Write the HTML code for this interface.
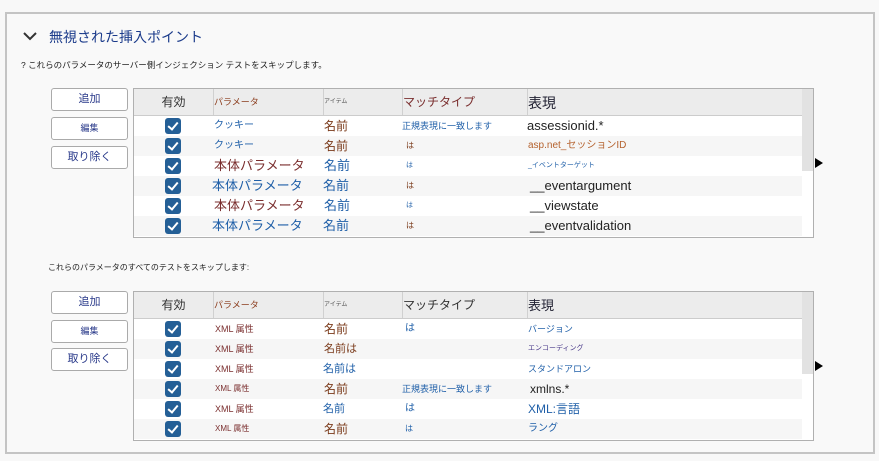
<!DOCTYPE html>
<html><head><meta charset="utf-8"><style>
body{margin:0;width:879px;height:461px;background:#f8f8f8;font-family:"Liberation Sans","Noto Sans CJK JP",sans-serif;position:relative;overflow:hidden}
.a{position:absolute;white-space:nowrap}
.panel{position:absolute;left:5px;top:12px;width:866px;height:438px;border:2px solid #c4c4c4;background:#f9f9f9}
.btn{position:absolute;left:51px;width:75px;height:21px;border:1px solid #aaa;border-radius:3px;background:#fff;color:#2a3a8a;font-size:11px;text-align:center;line-height:21px}
.tbl{position:absolute;left:133px;width:679px;height:148px;border:1px solid #b0b0b0;background:#fff;overflow:hidden}
.hdr{position:absolute;left:0;top:0;width:668px;height:26px;background:#ececec;border-bottom:1px solid #ccc}
.hdr div{position:absolute;top:0;height:26px;border-left:1px solid #d0d0d0}
.sb{position:absolute;left:668px;top:0;width:11px;height:148px;background:#fff}
.sb i{position:absolute;left:0;top:0;width:11px;height:82px;background:#e2e2e2}
.row{position:absolute;left:0;width:668px;height:20px}
.row:nth-child(even){background:#f6f6f6}
.cb{position:absolute;left:31px;top:2px;width:16px;height:16px;border-radius:3px;background:#245f96}
.cb:after{content:"";position:absolute;left:5px;top:2px;width:4px;height:8px;border:solid #fff;border-width:0 2px 2px 0;transform:rotate(40deg)}
.c{position:absolute;top:0;line-height:20px}
.br{color:#7a3a1a}.bl{color:#1f5fa8}.dk{color:#222}.or{color:#b5622e}.mr{color:#7a2e2e}
.arrow{position:absolute;width:0;height:0;border-top:5px solid transparent;border-bottom:5px solid transparent;border-left:8px solid #000}
</style></head><body>
<div class="panel"></div>
<svg class="a" style="left:22px;top:30px" width="16" height="12"><path d="M2 3 L8 9 L14 3" stroke="#333" stroke-width="2" fill="none"/></svg>
<div class="a" style="left:49px;top:27px;font-size:14px;color:#1a3a8a">無視された挿入ポイント</div>
<div class="a" style="left:21px;top:59px;font-size:8.5px;color:#222">? これらのパラメータのサーバー側インジェクション テストをスキップします。</div>

<div class="btn" style="top:88px">追加</div>
<div class="btn" style="top:117px;font-size:9px">編集</div>
<div class="btn" style="top:146px">取り除く</div>

<div class="tbl" style="top:88px">
<div class="hdr">
<div style="left:0;border:0;width:79px;text-align:center;line-height:26px;font-size:12px;color:#333">有効</div>
<div style="left:79px;width:110px;line-height:26px;font-size:9px;color:#8a3a1a">パラメータ</div>
<div style="left:189px;width:79px;line-height:26px;font-size:6px;color:#555">アイテム</div>
<div style="left:268px;width:125px;line-height:26px;font-size:12px;color:#7a2e2e">マッチタイプ</div>
<div style="left:393px;width:275px;line-height:28px;font-size:14px;color:#223">表現</div>
</div>
<div style="position:absolute;top:27px;left:0">
<div class="row" style="top:0;background:#fff"><i class="cb"></i><span class="c bl" style="left:80px;font-size:10px">クッキー</span><span class="c br" style="left:190px;font-size:12px">名前</span><span class="c bl" style="left:268px;font-size:9px">正規表現に一致します</span><span class="c dk" style="left:393px;font-size:13px">assessionid.*</span></div>
<div class="row" style="top:20px;background:#f6f6f6"><i class="cb"></i><span class="c bl" style="left:80px;font-size:10px">クッキー</span><span class="c br" style="left:190px;font-size:12px">名前</span><span class="c br" style="left:272px;font-size:8px">は</span><span class="c or" style="left:394px;font-size:10px">asp.net_セッションID</span></div>
<div class="row" style="top:40px;background:#fff"><i class="cb"></i><span class="c mr" style="left:80px;font-size:13px">本体パラメータ</span><span class="c bl" style="left:190px;font-size:13px">名前</span><span class="c bl" style="left:272px;font-size:7px">は</span><span class="c bl" style="left:394px;font-size:7px">_イベントターゲット</span></div>
<div class="row" style="top:60px;background:#f6f6f6"><i class="cb"></i><span class="c bl" style="left:78px;font-size:13px">本体パラメータ</span><span class="c bl" style="left:189px;font-size:13px">名前</span><span class="c br" style="left:272px;font-size:8px">は</span><span class="c dk" style="left:396px;font-size:13px">__eventargument</span></div>
<div class="row" style="top:80px;background:#fff"><i class="cb"></i><span class="c mr" style="left:80px;font-size:13px">本体パラメータ</span><span class="c bl" style="left:190px;font-size:13px">名前</span><span class="c bl" style="left:272px;font-size:7px">は</span><span class="c dk" style="left:396px;font-size:13px">__viewstate</span></div>
<div class="row" style="top:100px;background:#f6f6f6"><i class="cb"></i><span class="c bl" style="left:78px;font-size:13px">本体パラメータ</span><span class="c bl" style="left:189px;font-size:13px">名前</span><span class="c br" style="left:272px;font-size:8px">は</span><span class="c dk" style="left:396px;font-size:13px">__eventvalidation</span></div>
</div>
<div class="sb"><i></i></div>
</div>
<div class="arrow" style="left:815px;top:158px"></div>

<div class="a" style="left:48px;top:262px;font-size:8px;color:#222">これらのパラメータのすべてのテストをスキップします:</div>

<div class="btn" style="top:291px">追加</div>
<div class="btn" style="top:320px;font-size:9px">編集</div>
<div class="btn" style="top:348px">取り除く</div>

<div class="tbl" style="top:291px">
<div class="hdr">
<div style="left:0;border:0;width:79px;text-align:center;line-height:26px;font-size:12px;color:#333">有効</div>
<div style="left:79px;width:110px;line-height:26px;font-size:9px;color:#8a3a1a">パラメータ</div>
<div style="left:189px;width:79px;line-height:26px;font-size:6px;color:#555">アイテム</div>
<div style="left:268px;width:125px;line-height:26px;font-size:12px;color:#333">マッチタイプ</div>
<div style="left:393px;width:275px;line-height:28px;font-size:13px;color:#223">表現</div>
</div>
<div style="position:absolute;top:27px;left:0">
<div class="row" style="top:0;background:#fff"><i class="cb"></i><span class="c mr" style="left:81px;font-size:9px">XML 属性</span><span class="c br" style="left:190px;font-size:12px">名前</span><span class="c bl" style="left:271px;font-size:10px">は</span><span class="c bl" style="left:394px;font-size:9px">バージョン</span></div>
<div class="row" style="top:20px;background:#f6f6f6"><i class="cb"></i><span class="c mr" style="left:81px;font-size:9px">XML 属性</span><span class="c br" style="left:190px;font-size:11px">名前は</span><span class="c" style="left:394px;font-size:7px;color:#4a3a8a">エンコーディング</span></div>
<div class="row" style="top:40px;background:#fff"><i class="cb"></i><span class="c mr" style="left:81px;font-size:9px">XML 属性</span><span class="c bl" style="left:189px;font-size:11px">名前は</span><span class="c bl" style="left:394px;font-size:9px">スタンドアロン</span></div>
<div class="row" style="top:60px;background:#f6f6f6"><i class="cb"></i><span class="c mr" style="left:81px;font-size:8px">XML 属性</span><span class="c br" style="left:190px;font-size:12px">名前</span><span class="c bl" style="left:268px;font-size:9px">正規表現に一致します</span><span class="c dk" style="left:396px;font-size:12px">xmlns.*</span></div>
<div class="row" style="top:80px;background:#fff"><i class="cb"></i><span class="c mr" style="left:81px;font-size:9px">XML 属性</span><span class="c bl" style="left:189px;font-size:11px">名前</span><span class="c bl" style="left:271px;font-size:10px">は</span><span class="c bl" style="left:394px;font-size:12px">XML:言語</span></div>
<div class="row" style="top:100px;background:#f6f6f6"><i class="cb"></i><span class="c mr" style="left:81px;font-size:8px">XML 属性</span><span class="c br" style="left:190px;font-size:12px">名前</span><span class="c bl" style="left:271px;font-size:8px">は</span><span class="c bl" style="left:394px;font-size:10px">ラング</span></div>
</div>
<div class="sb"><i></i></div>
</div>
<div class="arrow" style="left:815px;top:361px"></div>
</body></html>
